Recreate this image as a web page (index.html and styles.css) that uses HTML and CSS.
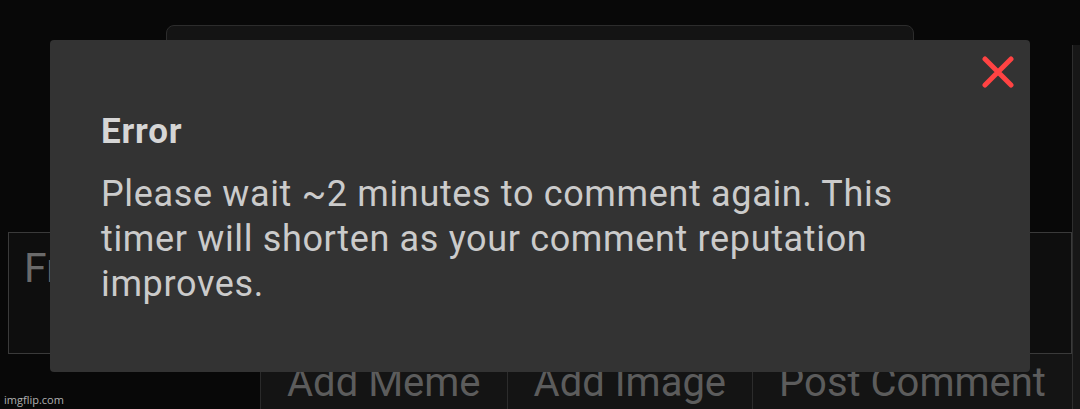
FILE: index.html
```html
<!DOCTYPE html>
<html lang="en">
<head>
  <meta charset="UTF-8">
  <meta name="viewport" content="width=device-width, initial-scale=1.0">
  <title>Comment Error</title>
  <link rel="stylesheet" href="styles.css">
</head>
<body>
  <div class="page">
    <!-- Main column -->
    <div class="main-col">
      <div class="top-box"></div>

      <!-- Comment form -->
      <div class="comment-form">
        <div class="comment-input">Fresh comment goes here</div>
        <div class="comment-actions">
          <button class="action-btn">Add Meme</button>
          <button class="action-btn">Add Image</button>
          <button class="action-btn">Post Comment</button>
        </div>
      </div>
    </div>

    <!-- Side column -->
    <aside class="side-col"></aside>

    <!-- Error popup -->
    <div class="popup">
      <button class="popup-close" aria-label="Close">
        <svg width="32" height="32" viewBox="0 0 32 32">
          <path d="M3 3 L29 29 M29 3 L3 29" stroke="#ff4343" stroke-width="5" stroke-linecap="round" fill="none"/>
        </svg>
      </button>
      <div class="popup-title">Error</div>
      <div class="popup-msg">Please wait ~2 minutes to comment again. This timer will shorten as your comment reputation improves.</div>
    </div>

    <div class="watermark">imgflip.com</div>
  </div>
</body>
</html>
```

FILE: styles.css
```css
/* General Styles */
body {
  margin: 0;
  background: #080808;
  font-family: Roboto, 'Noto Sans', sans-serif;
  overflow: hidden;
}

.page {
  position: relative;
  display: flex;
  width: 1080px;
  height: 409px;
  overflow: hidden;
}

/* Main column */
.main-col {
  width: 1064px;
  margin-left: 8px;
  padding-top: 25px;
}

.top-box {
  width: 746px;
  height: 190px;
  margin-left: 158px;
  margin-bottom: 15px;
  background: #141414;
  border: 1px solid #2c2c2c;
  border-radius: 8px;
}

/* Comment form */
.comment-input {
  box-sizing: border-box;
  height: 122px;
  padding: 11px 15px;
  border: 1px solid #3a3a3a;
  background: #0e0e0e;
  color: #6a6a6a;
  font-size: 41px;
  line-height: 48px;
}

.comment-actions {
  display: flex;
  margin-left: 252px;
  height: 57px;
  background: #141414;
  border-left: 1px solid #2a2a2a;
}

.action-btn {
  background: none;
  border: none;
  border-right: 1px solid #2c2c2c;
  padding: 0 26px;
  height: 60px;
  margin-top: -2px;
  font-family: Roboto, sans-serif;
  font-size: 40px;
  color: #5c5c5c;
}

.action-btn:last-child {
  border-right: none;
}

/* Side column */
.side-col {
  flex: 1;
  margin-top: 45px;
  background: #171717;
  border-left: 1px solid #2e2e2e;
}

/* Error popup */
.popup {
  position: absolute;
  left: 50px;
  top: 40px;
  width: 980px;
  height: 332px;
  box-sizing: border-box;
  padding: 71px 51px 0 51px;
  background: #333333;
  border-radius: 4px;
}

.popup-close {
  position: absolute;
  right: 16px;
  top: 16px;
  background: none;
  border: none;
  padding: 0;
  width: 32px;
  height: 32px;
  cursor: pointer;
}

.popup-title {
  font-size: 35px;
  font-weight: bold;
  letter-spacing: 0.8px;
  color: #d6d6d6;
  line-height: 42px;
}

.popup-msg {
  margin-top: 19px;
  font-size: 36px;
  letter-spacing: 0.65px;
  line-height: 45px;
  color: #cbcbcb;
}

.watermark {
  position: absolute;
  left: 4px;
  bottom: 2px;
  font-family: 'Open Sans', sans-serif;
  font-size: 11px;
  color: #b0b0b0;
}
```
